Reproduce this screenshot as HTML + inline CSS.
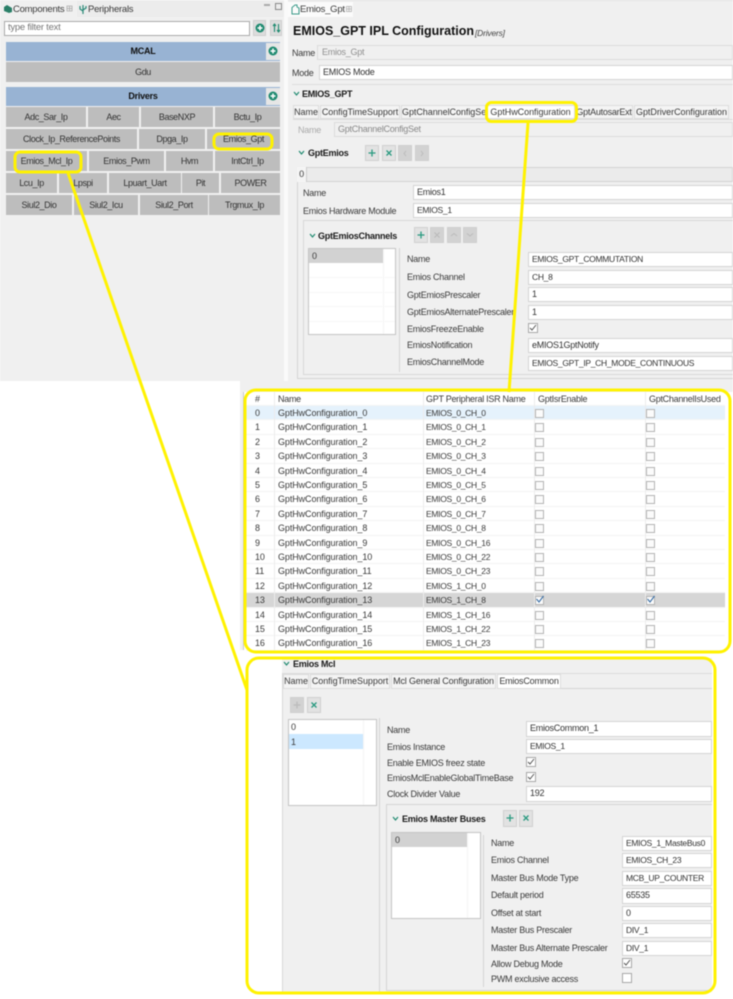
<!DOCTYPE html>
<html><head><meta charset="utf-8"><style>
html,body{margin:0;padding:0;background:#fff}
#w{position:relative;width:733px;height:999px;overflow:hidden;background:#fff;font:9px "Liberation Sans",sans-serif;letter-spacing:-.25px;color:#3a3a3a;filter:blur(.45px)}
#w div,#w span,#w svg,#w i{position:absolute}
.t{white-space:nowrap;line-height:14px;height:14px}
.b{font-weight:bold;color:#1a1a1a}
.f{background:#fff;border:1px solid #d4d4d4;box-sizing:border-box;line-height:12px;padding-left:3px;white-space:nowrap;overflow:hidden;color:#333}
.u{font-size:8.5px;letter-spacing:-.3px}
.d{background:#f0f0f0;color:#8f8f8f;border-color:#dcdcdc}
.c{background:#bdbdbd;text-align:center;line-height:20px;height:20px;color:#333;white-space:nowrap;letter-spacing:-.4px}
.h{background:#98b3d3;text-align:center;font-weight:bold;color:#111;height:19px;line-height:19px;left:6px;width:274px}
.tb{background:#f4f4f4;border:1px solid #dcdcdc;box-sizing:border-box;text-align:center;line-height:12px;height:14px;white-space:nowrap;overflow:hidden;letter-spacing:-.05px}
.k{width:10px;height:10px;box-sizing:border-box;border:1px solid #a8a8a8;background:#fff}
.s{background:#e2e2e2;border:1px solid #d0d0d0;box-sizing:border-box;width:14px;height:16px}
.g{background:#d2d2d2;border:1px solid #cfcfcf}
.r{left:246px;width:479px;height:14.4px;line-height:14px;border-bottom:1px solid #f3f3f3;box-sizing:border-box;white-space:nowrap;letter-spacing:-.09px}
.r span:nth-child(1){left:9px}.r span:nth-child(2){left:32px}.r span:nth-child(3){left:180px;font-size:8.5px;letter-spacing:-.3px}
.x1,.x2{width:9px;height:9px;top:3px;box-sizing:border-box;border:1px solid #b4b4b4;background:#fbfbfb}
.x1{left:289px}.x2{left:400px}
.lst{background:#fff;border:1px solid #c4c4c4;box-sizing:border-box}
</style></head><body><div id="w">

<!-- top grey background -->
<div style="left:0;top:0;width:284px;height:381px;background:#f0f0f0"></div>
<div style="left:284px;top:0;width:4px;height:381px;background:#fafafa"></div>
<div style="left:288px;top:0;width:445px;height:381px;background:#f0f0f0"></div>
<div style="left:288px;top:0;width:445px;height:1px;background:#e0e0e0"></div>

<!-- left panel -->
<svg style="left:3px;top:4px" width="10" height="10" viewBox="0 0 10 10"><path d="M1 3l3-2 5 3v4l-3 1-5-2z" fill="#2a7f68"/></svg>
<div class="t" style="left:13px;top:3px;font-size:9.5px">Components</div>
<svg style="left:66px;top:5px" width="7" height="7" viewBox="0 0 7 7"><path d="M1 1h5v5H1zM1 3.5h5M3.500 1v5" fill="none" stroke="#aaa" stroke-width=".8"/></svg>
<div style="left:77px;top:1px;width:207px;height:16px;background:#ececec"></div>
<svg style="left:79px;top:4px" width="8" height="11" viewBox="0 0 8 11"><path d="M4 1v9M1 2v3l3 2M7 2v2L4 6" fill="none" stroke="#2a8a78" stroke-width="1.2"/></svg>
<div class="t" style="left:88px;top:3px;font-size:9.500px">Peripherals</div>
<div style="left:264px;top:4px;width:6px;height:2px;background:#aaa"></div>
<div style="left:275px;top:3px;width:5px;height:5px;border:1px solid #888"></div>
<div class="f" style="left:4px;top:21px;width:246px;height:15px;border-color:#aaa;color:#777;padding-left:3px;font-size:9.500px">type filter text</div>
<div style="left:253px;top:20px;width:13px;height:16px;background:#dcdcdc;border:1px solid #cfcfcf;box-sizing:border-box"></div>
<svg style="left:255px;top:23px" width="10" height="10" viewBox="0 0 10 10"><circle cx="5" cy="5" r="4.500" fill="#1f8a70"/><path d="M5 2.500v5M2.500 5h5" stroke="#fff" stroke-width="1.500"/></svg>
<div style="left:270px;top:20px;width:12px;height:16px;background:#dcdcdc;border:1px solid #cfcfcf;box-sizing:border-box"></div>
<svg style="left:272px;top:23px" width="9" height="10" viewBox="0 0 9 10"><path d="M2.500 9V1M1 3l1.500-2L4 3M6.500 1v8M5 7l1.500 2L8 7" fill="none" stroke="#1f8a70" stroke-width="1.100"/></svg>

<div class="h" style="top:42px;color:#111">MCAL</div>
<div style="left:266px;top:43px;width:14px;height:17px;background:#e6e6e6"></div>
<svg style="left:268px;top:46px" width="10" height="10" viewBox="0 0 10 10"><circle cx="5" cy="5" r="4.500" fill="#1f8a70"/><path d="M5 2.500v5M2.500 5h5" stroke="#fff" stroke-width="1.500"/></svg>
<div class="c" style="left:6px;top:62px;width:274px">Gdu</div>
<div class="h" style="top:87px">Drivers</div>
<div style="left:266px;top:88px;width:14px;height:17px;background:#e6e6e6"></div>
<svg style="left:268px;top:91px" width="10" height="10" viewBox="0 0 10 10"><circle cx="5" cy="5" r="4.500" fill="#1f8a70"/><path d="M5 2.500v5M2.500 5h5" stroke="#fff" stroke-width="1.500"/></svg>

<div class="c" style="left:6px;top:107px;width:80px">Adc_Sar_Ip</div>
<div class="c" style="left:88px;top:107px;width:51px">Aec</div>
<div class="c" style="left:141px;top:107px;width:72px">BaseNXP</div>
<div class="c" style="left:215px;top:107px;width:65px">Bctu_Ip</div>
<div class="c" style="left:6px;top:129px;width:131px">Clock_Ip_ReferencePoints</div>
<div class="c" style="left:139px;top:129px;width:66px">Dpga_Ip</div>
<div class="c" style="left:207px;top:129px;width:73px">Emios_Gpt</div>
<div class="c" style="left:6px;top:151px;width:81px">Emios_Mcl_Ip</div>
<div class="c" style="left:89px;top:151px;width:75px">Emios_Pwm</div>
<div class="c" style="left:166px;top:151px;width:47px">Hvm</div>
<div class="c" style="left:215px;top:151px;width:65px">IntCtrl_Ip</div>
<div class="c" style="left:6px;top:173px;width:51px">Lcu_Ip</div>
<div class="c" style="left:59px;top:173px;width:48px">Lpspi</div>
<div class="c" style="left:109px;top:173px;width:72px">Lpuart_Uart</div>
<div class="c" style="left:182px;top:173px;width:37px">Pit</div>
<div class="c" style="left:221px;top:173px;width:59px">POWER</div>
<div class="c" style="left:6px;top:195px;width:66px">Siul2_Dio</div>
<div class="c" style="left:74px;top:195px;width:64px">Siul2_Icu</div>
<div class="c" style="left:140px;top:195px;width:68px">Siul2_Port</div>
<div class="c" style="left:209px;top:195px;width:71px">Trgmux_Ip</div>

<!-- right top panel -->
<div style="left:288px;top:2px;width:65px;height:15px;background:#fbfbfb"></div>
<svg style="left:291px;top:4px" width="9" height="11" viewBox="0 0 9 11"><path d="M1 3.500L4 1h2v2l2 1v6H1z" fill="none" stroke="#3a9a88" stroke-width="1"/></svg>
<div class="t" style="left:300px;top:3px;font-size:9.500px">Emios_Gpt</div>
<svg style="left:346px;top:6px" width="6" height="6" viewBox="0 0 6 6"><path d="M.5.500h5v5h-5zM.5 3h5M3 .500v5" fill="none" stroke="#aaa" stroke-width=".7"/></svg>
<div class="t" style="left:293px;top:24px;font-size:12.500px;font-weight:bold;color:#111;letter-spacing:0">EMIOS_GPT IPL Configuration</div>
<div class="t" style="left:475px;top:26px;font-size:8.500px;font-style:italic;color:#444;letter-spacing:-.2px">[Drivers]</div>
<div class="t" style="left:292px;top:46px">Name</div>
<div class="f d" style="left:317px;top:45px;width:416px;height:15px;padding-left:4px">Emios_Gpt</div>
<div class="t" style="left:292px;top:66px">Mode</div>
<div class="f" style="left:319px;top:65px;width:414px;height:15px">EMIOS Mode</div>
<div style="left:292px;top:84px;width:441px;height:1px;background:#ddd"></div>
<svg style="left:293px;top:91px" width="7" height="6" viewBox="0 0 7 6"><path d="M1 1l2.500 3L6 1" fill="none" stroke="#1f8a70" stroke-width="1.200"/></svg>
<div class="t b" style="left:302px;top:87px">EMIOS_GPT</div>

<div class="tb" style="left:293px;top:105px;width:26px">Name</div>
<div class="tb" style="left:320px;top:105px;width:80px">ConfigTimeSupport</div>
<div class="tb" style="left:401px;top:105px;width:85px">GptChannelConfigSet</div>
<div class="tb" style="left:486px;top:105px;width:89px;background:#fff">GptHwConfiguration</div>
<div class="tb" style="left:575px;top:105px;width:58px;letter-spacing:-.25px">GptAutosarExt</div>
<div class="tb" style="left:634px;top:105px;width:95px">GptDriverConfiguration</div>
<div style="left:293px;top:119px;width:440px;height:1px;background:#dcdcdc"></div>

<div class="t" style="left:298px;top:123px;color:#aaa">Name</div>
<div class="f d" style="left:334px;top:122px;width:399px;height:15px;color:#888">GptChannelConfigSet</div>
<svg style="left:298px;top:150px" width="7" height="6" viewBox="0 0 7 6"><path d="M1 1l2.500 3L6 1" fill="none" stroke="#1f8a70" stroke-width="1.200"/></svg>
<div class="t b" style="left:308px;top:146px">GptEmios</div>
<div class="s" style="left:365px;top:145px"></div>
<svg style="left:368px;top:149px" width="8" height="8" viewBox="0 0 8 8"><path d="M4 .500v7M.500 4h7" stroke="#2a9a80" stroke-width="1.300"/></svg>
<div class="s" style="left:382px;top:145px"></div>
<svg style="left:385px;top:149px" width="8" height="8" viewBox="0 0 8 8"><path d="M1.500 1.500l5 5M6.500 1.500l-5 5" stroke="#2a9a80" stroke-width="1.300"/></svg>
<div class="s g" style="left:398px;top:145px"></div>
<svg style="left:402px;top:150px" width="6" height="7" viewBox="0 0 6 7"><path d="M4 1L2 3.500 4 6" fill="none" stroke="#bbb"/></svg>
<div class="s g" style="left:415px;top:145px"></div>
<svg style="left:419px;top:150px" width="6" height="7" viewBox="0 0 6 7"><path d="M2 1l2 2.500L2 6" fill="none" stroke="#bbb"/></svg>

<div style="left:297px;top:167px;width:436px;height:212px;border:1px solid #d4d4d4;border-right:0;box-sizing:border-box"></div>
<div style="left:297px;top:167px;width:436px;height:15px;background:#ebebeb;border:1px solid #d4d4d4;box-sizing:border-box"></div>
<div class="t" style="left:297px;top:167px;width:9px;height:15px;background:#f4f4f4;border-right:1px solid #ccc;text-align:center">0</div>
<div class="t" style="left:303px;top:186px">Name</div>
<div class="f" style="left:413px;top:185px;width:320px;height:15px">Emios1</div>
<div class="t" style="left:303px;top:204px">Emios Hardware Module</div>
<div class="f u" style="left:413px;top:203px;width:320px;height:15px">EMIOS_1</div>

<div style="left:303px;top:220px;width:430px;height:155px;border:1px solid #d8d8d8;border-right:0;box-sizing:border-box"></div>
<svg style="left:309px;top:233px" width="7" height="6" viewBox="0 0 7 6"><path d="M1 1l2.500 3L6 1" fill="none" stroke="#1f8a70" stroke-width="1.200"/></svg>
<div class="t b" style="left:318px;top:229px">GptEmiosChannels</div>
<div class="s" style="left:414px;top:227px"></div>
<svg style="left:417px;top:231px" width="8" height="8" viewBox="0 0 8 8"><path d="M4 .500v7M.500 4h7" stroke="#2a9a80" stroke-width="1.300"/></svg>
<div class="s g" style="left:430px;top:227px"></div>
<svg style="left:433px;top:231px" width="8" height="8" viewBox="0 0 8 8"><path d="M1.500 1.500l5 5M6.500 1.500l-5 5" stroke="#bbb" stroke-width="1.200"/></svg>
<div class="s g" style="left:447px;top:227px"></div>
<svg style="left:450px;top:232px" width="8" height="6" viewBox="0 0 8 6"><path d="M1 4l3-2.500L7 4" fill="none" stroke="#bbb"/></svg>
<div class="s g" style="left:463px;top:227px"></div>
<svg style="left:466px;top:232px" width="8" height="6" viewBox="0 0 8 6"><path d="M1 1.500L4 4l3-2.500" fill="none" stroke="#bbb"/></svg>

<div class="lst" style="left:308px;top:248px;width:88px;height:87px"></div>
<div style="left:309px;top:249px;width:74px;height:14px;background:#d2d2d2"></div>
<div class="t" style="left:312px;top:249px">0</div>
<div style="left:383px;top:249px;width:1px;height:85px;background:#f4f4f4"></div>
<div style="left:309px;top:277px;width:86px;height:1px;background:#f7f7f7"></div>
<div style="left:309px;top:292px;width:86px;height:1px;background:#f7f7f7"></div>
<div style="left:309px;top:306px;width:86px;height:1px;background:#f7f7f7"></div>
<div style="left:309px;top:321px;width:86px;height:1px;background:#f7f7f7"></div>
<div style="left:399px;top:248px;width:1px;height:124px;background:#d4d4d4"></div>

<div class="t" style="left:407px;top:252px">Name</div>
<div class="f u" style="left:528px;top:252px;width:205px;height:15px">EMIOS_GPT_COMMUTATION</div>
<div class="t" style="left:407px;top:270px">Emios Channel</div>
<div class="f u" style="left:528px;top:270px;width:205px;height:15px">CH_8</div>
<div class="t" style="left:407px;top:288px">GptEmiosPrescaler</div>
<div class="f" style="left:528px;top:287px;width:205px;height:15px">1</div>
<div class="t" style="left:407px;top:305px;width:113px;overflow:hidden">GptEmiosAlternatePrescaler</div>
<div class="f" style="left:528px;top:305px;width:205px;height:15px">1</div>
<div class="t" style="left:407px;top:322px">EmiosFreezeEnable</div>
<div class="k" style="left:528px;top:323px"></div>
<svg style="left:529px;top:324px" width="8" height="8" viewBox="0 0 8 8"><path d="M1 4l2 2 4-5" fill="none" stroke="#555"/></svg>
<div class="t" style="left:407px;top:338px">EmiosNotification</div>
<div class="f" style="left:528px;top:338px;width:205px;height:15px">eMIOS1GptNotify</div>
<div class="t" style="left:407px;top:355px">EmiosChannelMode</div>
<div class="f u" style="left:528px;top:356px;width:205px;height:15px">EMIOS_GPT_IP_CH_MODE_CONTINUOUS</div>

<div style="left:240px;top:381px;width:493px;height:11px;background:#f0f0f0"></div>

<!-- table -->
<div style="left:240px;top:392px;width:3px;height:258px;background:#f0f0f0"></div>
<div style="left:243px;top:392px;width:1px;height:258px;background:#c8c8c8"></div>
<div class="r" style="top:392px;letter-spacing:-.28px"><span>#</span><span>Name</span><span style="font-size:9px;letter-spacing:-.28px">GPT Peripheral ISR Name</span><span style="left:292px">GptIsrEnable</span><span style="left:403px">GptChannelIsUsed</span></div>
<div class="r" style="top:406px;background:#e5f2fc"><span>0</span><span>GptHwConfiguration_0</span><span>EMIOS_0_CH_0</span><i class="x1"></i><i class="x2"></i></div>
<div class="r" style="top:420.400px"><span>1</span><span>GptHwConfiguration_1</span><span>EMIOS_0_CH_1</span><i class="x1"></i><i class="x2"></i></div>
<div class="r" style="top:434.800px"><span>2</span><span>GptHwConfiguration_2</span><span>EMIOS_0_CH_2</span><i class="x1"></i><i class="x2"></i></div>
<div class="r" style="top:449.200px"><span>3</span><span>GptHwConfiguration_3</span><span>EMIOS_0_CH_3</span><i class="x1"></i><i class="x2"></i></div>
<div class="r" style="top:463.600px"><span>4</span><span>GptHwConfiguration_4</span><span>EMIOS_0_CH_4</span><i class="x1"></i><i class="x2"></i></div>
<div class="r" style="top:478px"><span>5</span><span>GptHwConfiguration_5</span><span>EMIOS_0_CH_5</span><i class="x1"></i><i class="x2"></i></div>
<div class="r" style="top:492.400px"><span>6</span><span>GptHwConfiguration_6</span><span>EMIOS_0_CH_6</span><i class="x1"></i><i class="x2"></i></div>
<div class="r" style="top:506.800px"><span>7</span><span>GptHwConfiguration_7</span><span>EMIOS_0_CH_7</span><i class="x1"></i><i class="x2"></i></div>
<div class="r" style="top:521.200px"><span>8</span><span>GptHwConfiguration_8</span><span>EMIOS_0_CH_8</span><i class="x1"></i><i class="x2"></i></div>
<div class="r" style="top:535.600px"><span>9</span><span>GptHwConfiguration_9</span><span>EMIOS_0_CH_16</span><i class="x1"></i><i class="x2"></i></div>
<div class="r" style="top:550px"><span>10</span><span>GptHwConfiguration_10</span><span>EMIOS_0_CH_22</span><i class="x1"></i><i class="x2"></i></div>
<div class="r" style="top:564.400px"><span>11</span><span>GptHwConfiguration_11</span><span>EMIOS_0_CH_23</span><i class="x1"></i><i class="x2"></i></div>
<div class="r" style="top:578.800px"><span>12</span><span>GptHwConfiguration_12</span><span>EMIOS_1_CH_0</span><i class="x1"></i><i class="x2"></i></div>
<div class="r" style="top:593.200px;background:#d6d6d6"><span>13</span><span>GptHwConfiguration_13</span><span>EMIOS_1_CH_8</span><i class="x1"></i><i class="x2"></i></div>
<div class="r" style="top:607.600px"><span>14</span><span>GptHwConfiguration_14</span><span>EMIOS_1_CH_16</span><i class="x1"></i><i class="x2"></i></div>
<div class="r" style="top:622px"><span>15</span><span>GptHwConfiguration_15</span><span>EMIOS_1_CH_22</span><i class="x1"></i><i class="x2"></i></div>
<div class="r" style="top:636.400px"><span>16</span><span>GptHwConfiguration_16</span><span>EMIOS_1_CH_23</span><i class="x1"></i><i class="x2"></i></div>
<svg style="left:535px;top:595px" width="10" height="9" viewBox="0 0 10 9"><path d="M1.500 4l2.500 3 4.500-6" fill="none" stroke="#3a6ea5" stroke-width="1.100"/></svg>
<svg style="left:646px;top:595px" width="10" height="9" viewBox="0 0 10 9"><path d="M1.500 4l2.500 3 4.500-6" fill="none" stroke="#3a6ea5" stroke-width="1.100"/></svg>
<div style="left:274px;top:392px;width:1px;height:258px;background:#ececec"></div>
<div style="left:423px;top:392px;width:1px;height:258px;background:#ececec"></div>
<div style="left:534px;top:392px;width:1px;height:258px;background:#ececec"></div>
<div style="left:645px;top:392px;width:1px;height:258px;background:#ececec"></div>

<!-- Emios Mcl -->
<div style="left:282px;top:658px;width:430px;height:334px;background:#f0f0f0"></div>
<svg style="left:283px;top:661px" width="7" height="6" viewBox="0 0 7 6"><path d="M1 1l2.500 3L6 1" fill="none" stroke="#1f8a70" stroke-width="1.200"/></svg>
<div class="t b" style="left:293px;top:657px">Emios Mcl</div>
<div style="left:282px;top:673px;width:430px;height:1px;background:#dcdcdc"></div>
<div style="left:282px;top:673px;width:1px;height:319px;background:#d8d8d8"></div>
<div class="tb" style="left:283px;top:674px;width:26px;height:15px">Name</div>
<div class="tb" style="left:310px;top:674px;width:80px;height:15px">ConfigTimeSupport</div>
<div class="tb" style="left:391px;top:674px;width:105px;height:15px;letter-spacing:-.15px">Mcl General Configuration</div>
<div class="tb" style="left:497px;top:674px;width:64px;height:15px;background:#fff;letter-spacing:-.2px">EmiosCommon</div>
<div style="left:561px;top:688px;width:151px;height:1px;background:#d4d4d4"></div>
<div class="s g" style="left:290px;top:697px"></div>
<svg style="left:293px;top:701px" width="8" height="8" viewBox="0 0 8 8"><path d="M4 .500v7M.500 4h7" stroke="#bbb" stroke-width="1.300"/></svg>
<div class="s" style="left:307px;top:697px"></div>
<svg style="left:310px;top:701px" width="8" height="8" viewBox="0 0 8 8"><path d="M1.500 1.500l5 5M6.500 1.500l-5 5" stroke="#2a9a80" stroke-width="1.300"/></svg>
<div class="lst" style="left:288px;top:719px;width:89px;height:87px"></div>
<div class="t" style="left:291px;top:720px">0</div>
<div style="left:289px;top:734px;width:74px;height:14.500px;background:#cce8ff"></div>
<div class="t" style="left:291px;top:735px">1</div>
<div style="left:363px;top:720px;width:1px;height:85px;background:#f4f4f4"></div>
<div style="left:379px;top:718px;width:1px;height:274px;background:#d4d4d4"></div>
<div class="t" style="left:387px;top:723px">Name</div>
<div class="f" style="left:526px;top:721px;width:186px;height:16px">EmiosCommon_1</div>
<div class="t" style="left:387px;top:740px">Emios Instance</div>
<div class="f u" style="left:526px;top:739px;width:186px;height:15px">EMIOS_1</div>
<div class="t" style="left:387px;top:756px">Enable EMIOS freez state</div>
<div class="k" style="left:526px;top:757px"></div>
<svg style="left:527px;top:758px" width="8" height="8" viewBox="0 0 8 8"><path d="M1 4l2 2 4-5" fill="none" stroke="#555"/></svg>
<div class="t" style="left:387px;top:771px">EmiosMclEnableGlobalTimeBase</div>
<div class="k" style="left:526px;top:772px"></div>
<svg style="left:527px;top:773px" width="8" height="8" viewBox="0 0 8 8"><path d="M1 4l2 2 4-5" fill="none" stroke="#555"/></svg>
<div class="t" style="left:387px;top:787px">Clock Divider Value</div>
<div class="f" style="left:526px;top:786px;width:186px;height:16px">192</div>

<div style="left:386px;top:804px;width:326px;height:187px;border:1px solid #d4d4d4;border-right:0;box-sizing:border-box"></div>
<svg style="left:392px;top:816px" width="7" height="6" viewBox="0 0 7 6"><path d="M1 1l2.500 3L6 1" fill="none" stroke="#1f8a70" stroke-width="1.200"/></svg>
<div class="t b" style="left:402px;top:812px">Emios Master Buses</div>
<div class="s" style="left:503px;top:810px;height:17px"></div>
<svg style="left:506px;top:814px" width="8" height="8" viewBox="0 0 8 8"><path d="M4 .500v7M.500 4h7" stroke="#2a9a80" stroke-width="1.300"/></svg>
<div class="s" style="left:519px;top:810px;height:17px"></div>
<svg style="left:522px;top:814px" width="8" height="8" viewBox="0 0 8 8"><path d="M1.500 1.500l5 5M6.500 1.500l-5 5" stroke="#2a9a80" stroke-width="1.300"/></svg>
<div class="lst" style="left:391px;top:832px;width:90px;height:87px"></div>
<div style="left:392px;top:833px;width:75px;height:14px;background:#d2d2d2"></div>
<div class="t" style="left:395px;top:833px">0</div>
<div style="left:467px;top:833px;width:1px;height:85px;background:#f4f4f4"></div>
<div style="left:483px;top:835px;width:1px;height:152px;background:#d4d4d4"></div>

<div class="t" style="left:491px;top:836px">Name</div>
<div class="f u" style="left:622px;top:836px;width:90px;height:15px">EMIOS_1_MasteBus0</div>
<div class="t" style="left:491px;top:853px">Emios Channel</div>
<div class="f u" style="left:622px;top:853px;width:90px;height:15px">EMIOS_CH_23</div>
<div class="t" style="left:491px;top:871px">Master Bus Mode Type</div>
<div class="f u" style="left:622px;top:871px;width:90px;height:15px">MCB_UP_COUNTER</div>
<div class="t" style="left:491px;top:888px">Default period</div>
<div class="f" style="left:622px;top:888px;width:90px;height:16px">65535</div>
<div class="t" style="left:491px;top:906px">Offset at start</div>
<div class="f" style="left:622px;top:906px;width:90px;height:15px">0</div>
<div class="t" style="left:491px;top:923px">Master Bus Prescaler</div>
<div class="f u" style="left:622px;top:923px;width:90px;height:15px">DIV_1</div>
<div class="t" style="left:491px;top:941px">Master Bus Alternate Prescaler</div>
<div class="f u" style="left:622px;top:941px;width:90px;height:15px">DIV_1</div>
<div class="t" style="left:491px;top:957px">Allow Debug Mode</div>
<div class="k" style="left:622px;top:958px"></div>
<svg style="left:623px;top:959px" width="8" height="8" viewBox="0 0 8 8"><path d="M1 4l2 2 4-5" fill="none" stroke="#555"/></svg>
<div class="t" style="left:491px;top:972px">PWM exclusive access</div>
<div class="k" style="left:622px;top:973px"></div>

<!-- yellow annotations -->
<svg style="left:0;top:0" width="733" height="999" viewBox="0 0 733 999" fill="none" stroke="#fff200" stroke-width="3">
<rect x="214" y="134" width="58" height="15" rx="5"/>
<rect x="15" y="152" width="66" height="20" rx="5"/>
<rect x="486.500" y="102.500" width="90" height="19" rx="5"/>
<rect x="245" y="390" width="485" height="262" rx="11"/>
<rect x="247" y="658" width="468" height="335" rx="12"/>
<path d="M528 123L509 392"/>
<path d="M68 173L247 690"/>
</svg>
</div></body></html>
